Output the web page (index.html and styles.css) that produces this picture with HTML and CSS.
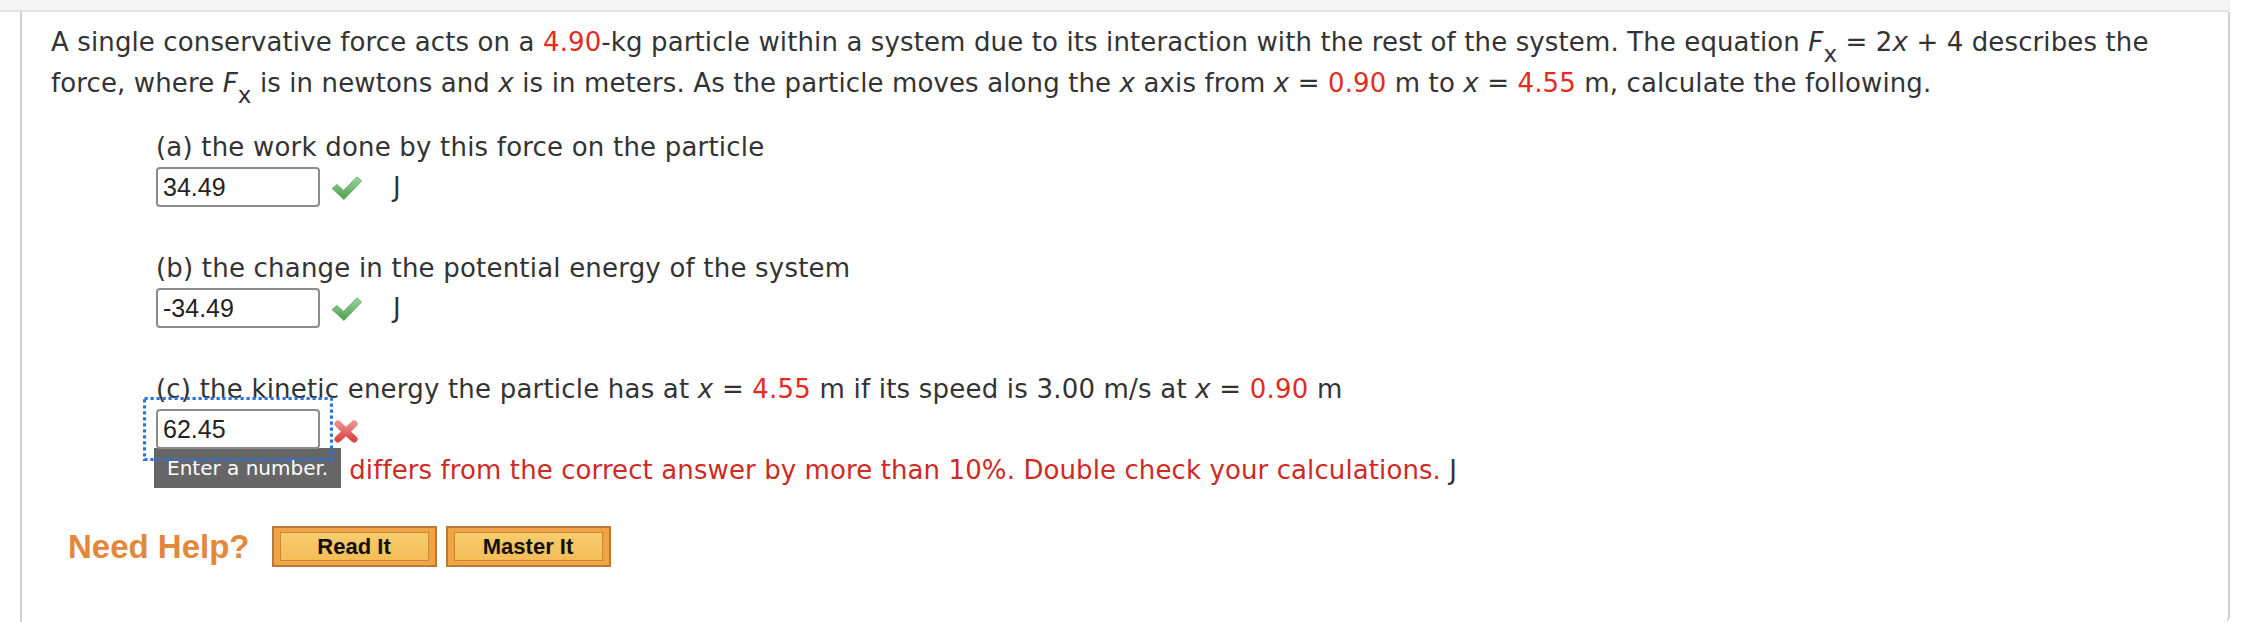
FILE: index.html
```html
<!DOCTYPE html>
<html>
<head>
<meta charset="utf-8">
<link rel="stylesheet" href="styles.css">
</head>
<body>
<div class="topbar"></div>
<div class="panel">
  <p class="question">A single conservative force acts on a <span class="val">4.90</span>-kg particle within a system due to its interaction with the rest of the system. The equation <i>F</i><sub>x</sub> = 2<i>x</i> + 4 describes the force, where <i>F</i><sub>x</sub> is in newtons and <i>x</i> is in meters. As the particle moves along the <i>x</i> axis from <i>x</i> = <span class="val">0.90</span> m to <i>x</i> = <span class="val">4.55</span> m, calculate the following.</p>
  <div class="parts">
    <div class="part">
      <div class="label">(a) the work done by this force on the particle</div>
      <div class="answer">
        <span class="field">34.49</span>
        <svg class="check" viewBox="0 0 31 24" width="31" height="24"><defs><linearGradient id="g1" x1="0" y1="0" x2="0" y2="1"><stop offset="0" stop-color="#9fd69f"/><stop offset="1" stop-color="#4b9f4b"/></linearGradient></defs><path d="M1 12.5 L6 8.5 L12.5 14.5 L26 0.8 L30.5 5 L13 23.5 Z" fill="url(#g1)" stroke="#5aa55a" stroke-width="0.8" stroke-linejoin="round"/></svg>
        <span class="unit">J</span>
      </div>
    </div>
    <div class="part">
      <div class="label">(b) the change in the potential energy of the system</div>
      <div class="answer">
        <span class="field">-34.49</span>
        <svg class="check" viewBox="0 0 31 24" width="31" height="24"><defs><linearGradient id="g2" x1="0" y1="0" x2="0" y2="1"><stop offset="0" stop-color="#9fd69f"/><stop offset="1" stop-color="#4b9f4b"/></linearGradient></defs><path d="M1 12.5 L6 8.5 L12.5 14.5 L26 0.8 L30.5 5 L13 23.5 Z" fill="url(#g2)" stroke="#5aa55a" stroke-width="0.8" stroke-linejoin="round"/></svg>
        <span class="unit">J</span>
      </div>
    </div>
    <div class="part">
      <div class="label">(c) the kinetic energy the particle has at <i>x</i> = <span class="val">4.55</span> m if its speed is 3.00 m/s at <i>x</i> = <span class="val">0.90</span> m</div>
      <div class="answer">
        <span class="focus-wrap">
          <span class="field">62.45</span>
          <svg class="focus" width="190" height="64" viewBox="0 0 190 64"><rect x="1.5" y="1.5" width="187" height="61" fill="none" stroke="#2a74d8" stroke-width="3.2" stroke-dasharray="3.2 2.8"/></svg>
        </span>
        <svg class="cross" viewBox="0 0 26 25" width="26" height="25"><defs><linearGradient id="g3" x1="0" y1="0" x2="0" y2="1"><stop offset="0" stop-color="#f08a8a"/><stop offset="1" stop-color="#d94848"/></linearGradient></defs><line x1="5" y1="5" x2="21" y2="20" stroke="url(#g3)" stroke-width="7" stroke-linecap="round"/><line x1="21" y1="5" x2="5" y2="20" stroke="url(#g3)" stroke-width="7" stroke-linecap="round"/></svg>
      </div>
      <div class="feedback">
        <span class="tooltip">Enter a number.</span>
        <span class="wrong">differs from the correct answer by more than 10%. Double check your calculations.</span><span class="unit-inline">&nbsp;J</span>
      </div>
    </div>
  </div>
  <div class="help">
    <span class="need">Need Help?</span>
    <span class="btn"><span class="btn-inner">Read It</span></span>
    <span class="btn"><span class="btn-inner">Master It</span></span>
  </div>
</div>
</body>
</html>
```
FILE: styles.css
```css
html, body {
  margin: 0;
  padding: 0;
  background: #ffffff;
}
body {
  font-family: "DejaVu Sans", Verdana, sans-serif;
  font-size: 26px;
  color: #333333;
  width: 2248px;
  height: 622px;
  overflow: hidden;
}
.topbar {
  width: 2230px;
  height: 10px;
  background: #f5f5f5;
  border-bottom: 2px solid #e1e1e1;
  border-bottom-right-radius: 4px;
}
.panel {
  margin-left: 20px;
  width: 2210px;
  height: 610px;
  box-sizing: border-box;
  border-left: 2px solid #cfcfcf;
  border-right: 2px solid #cfcfcf;
  border-bottom-right-radius: 6px;
  padding: 10px 29px 0 29px;
}
.question {
  margin: 0;
  line-height: 41px;
  letter-spacing: 0.12px;
}
.question i, .label i {
  font-style: italic;
}
sub {
  font-size: 23px;
  vertical-align: -11px;
  line-height: 0;
}
.val {
  color: #e52a1e;
}
.parts {
  margin-left: 105px;
  margin-top: 28px;
}
.part + .part {
  margin-top: 46px;
}
.label {
  line-height: 30px;
  white-space: nowrap;
  letter-spacing: 0.2px;
}
.answer {
  display: flex;
  align-items: center;
  height: 40px;
  margin-top: 5px;
}
.field {
  display: flex;
  align-items: center;
  width: 164px;
  height: 40px;
  box-sizing: border-box;
  border: 2px solid #8c8c8c;
  border-radius: 4px;
  padding-left: 5px;
  font-family: "Liberation Sans", Arial, sans-serif;
  font-size: 25px;
  color: #222222;
  background: #ffffff;
}
.check {
  margin-left: 11px;
  margin-top: 2px;
}
.unit {
  margin-left: 31px;
}
.focus-wrap {
  position: relative;
  display: block;
}
.focus {
  position: absolute;
  left: -13px;
  top: -12px;
}
.cross {
  margin-left: 13px;
  margin-top: 4px;
}
.feedback {
  display: flex;
  align-items: center;
  height: 40px;
  margin-top: -1px;
  white-space: nowrap;
}
.tooltip {
  margin-left: -2px;
  height: 40px;
  line-height: 40px;
  padding: 0 13px;
  background: #666666;
  color: #ffffff;
  font-size: 20px;
}
.wrong {
  margin-left: 8px;
  color: #d0291f;
  padding-top: 4px;
  letter-spacing: 0.1px;
}
.unit-inline {
  padding-top: 4px;
}
.help {
  display: flex;
  align-items: center;
  margin-top: 38px;
  margin-left: 17px;
}
.need {
  font-family: "Liberation Sans", Arial, sans-serif;
  font-weight: bold;
  font-size: 33px;
  color: #e3873a;
  margin-right: 22px;
}
.btn {
  display: block;
  border: 2px solid #b87a36;
  background: #f0a443;
  padding: 4px 6px;
}
.btn + .btn {
  margin-left: 9px;
}
.btn-inner {
  display: flex;
  align-items: center;
  justify-content: center;
  width: 147px;
  height: 27px;
  border: 1px solid #c4863a;
  background: linear-gradient(#f8cc6e, #f5bd56);
  font-family: "Liberation Sans", Arial, sans-serif;
  font-weight: bold;
  font-size: 22px;
  color: #111111;
}
```
